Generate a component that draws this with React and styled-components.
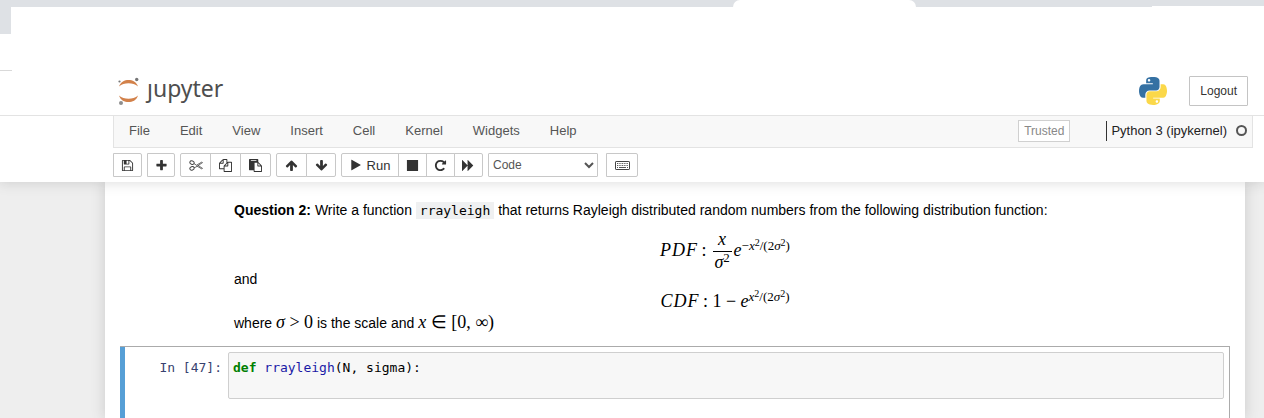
import React from "react";
import styled, { createGlobalStyle } from "styled-components";

const GlobalStyle = createGlobalStyle`
  * { box-sizing: border-box; }
  body {
    margin: 0;
    background: #eee;
    color: #000;
    font: 14px/20px "Liberation Sans", Arial, sans-serif;
  }
  button, select { font-family: inherit; margin: 0; }
`;

const Page = styled.div`
  display: flex;
  flex-direction: column;
  height: 100vh;
  overflow: hidden;
`;

/* Browser chrome */
const TabStrip = styled.div`
  position: relative;
  z-index: 2;
  display: grid;
  grid-template-columns: 58% 183px 1fr 112px;
  flex: none;
  height: 7px;
  background: #dee1e5;
`;
const ActiveTab = styled.div`
  grid-column: 2;
  background: #fff;
  border-radius: 8px 8px 0 0;
`;
const StripEnd = styled.div`
  grid-column: 4;
  border-bottom: 1px solid #fff;
`;
const WindowEdge = styled.div`
  width: 12px;
  height: 64px;
  border-bottom: 1px solid #d9d9d9;
  &::before {
    content: "";
    display: block;
    width: 11px;
    height: 27px;
    background: #dee1e5;
  }
`;

/* Header */
const Header = styled.header`
  position: relative;
  z-index: 1;
  flex: none;
  background: #fff;
  box-shadow: 0 0 12px 1px rgba(87, 87, 87, 0.2);
`;
const Brand = styled.div`
  display: flex;
  align-items: center;
  gap: 22px;
  padding: 5px 16px 9px 118px;
  border-bottom: 1px solid #e3e3e3;
`;
const Logo = styled.a`
  display: flex;
  align-items: center;
  gap: 8px;
  margin-right: auto;
  height: 30px;
  color: #4e4e4e;
  font: 23px/26px "Noto Sans", "Open Sans", sans-serif;
  text-decoration: none;
`;
const Wordmark = styled.span`
  padding-bottom: 6px;
`;
const LogoutButton = styled.button`
  height: 30px;
  padding: 0 10px;
  border: 1px solid #c4c4c4;
  border-radius: 1px;
  background: #fff;
  color: #333;
  font-size: 12px;
`;
const MenuBar = styled.nav`
  display: flex;
  align-items: center;
  height: 32px;
  margin: 0 11px 0 113px;
  padding-right: 5px;
  border: 1px solid #e3e3e3;
  border-top: 0;
  background: #f8f8f8;
`;
const MenuItem = styled.button`
  padding: 0 15px 2px;
  border: 0;
  background: none;
  color: #555;
  font-size: 13px;
  line-height: 28px;
`;
const Trusted = styled.button`
  height: 22px;
  margin: 0 36px 1px auto;
  padding: 0 5px;
  border: 1px solid #d0d0d0;
  background: #fff;
  color: #888;
  font-size: 12px;
`;
const Kernel = styled.span`
  display: flex;
  align-items: center;
  gap: 9px;
  height: 20px;
  margin-bottom: 2px;
  padding-left: 4px;
  border-left: 1px solid #333;
  color: #222;
  font-size: 13px;
`;
const IdleDot = styled.span`
  width: 11px;
  height: 11px;
  border: 2px solid #555;
  border-radius: 50%;
`;
const Toolbar = styled.div`
  display: flex;
  gap: 5px;
  padding: 5px 11px 5px 113px;
`;
const Group = styled.div`
  display: flex;
`;
const ToolButton = styled.button`
  display: flex;
  align-items: center;
  justify-content: center;
  gap: 5px;
  width: ${(p) => p.$width || 30}px;
  height: 24px;
  padding: 0;
  border: 1px solid #c8c8c8;
  background: #fff;
  color: #333;
  font-size: 13px;
  & + & { margin-left: -1px; }
  &:first-child { border-radius: 2px 0 0 2px; }
  &:last-child { border-radius: 0 2px 2px 0; }
`;
const CellType = styled.select`
  width: 110px;
  height: 24px;
  margin-right: 3px;
  padding: 0;
  border: 1px solid #c8c8c8;
  border-radius: 1px;
  background: #fff;
  color: #555;
  font-size: 12px;
`;

/* Notebook */
const Notebook = styled.main`
  display: flex;
  flex-direction: column;
  flex: 1;
  margin: 0 19px 0 105px;
  padding: 18px 15px 0;
  background: #fff;
  box-shadow: 0 0 12px 1px rgba(87, 87, 87, 0.2);
`;
const Markdown = styled.section`
  padding: 0 14px 13px 114px;
`;
const Text = styled.p`
  margin: 0;
`;
const InlineCode = styled.code`
  padding: 1px 4px;
  background: #eff0f1;
  font: 13px/16px "DejaVu Sans Mono", monospace;
`;
const Equation = styled.div`
  display: flex;
  align-items: center;
  justify-content: center;
  height: ${(p) => p.$height}px;
  padding-top: ${(p) => p.$top || 0}px;
  font: 18px/20px "Liberation Serif", "Times New Roman", serif;
  white-space: pre;
`;
const Name = styled.i`
  display: inline-flex;
  gap: 1px;
`;
const MathText = styled.span`
  font: 18px/20px "Liberation Serif", "Times New Roman", serif;
`;
const Fraction = styled.span`
  display: flex;
  flex-direction: column;
  align-items: center;
  width: 19px;
  margin: 4px 2px 0 6px;
`;
const Numerator = styled.i`
  align-self: stretch;
  padding-bottom: 4px;
  border-bottom: 1px solid #000;
  line-height: 16px;
  text-align: center;
`;
const Sup = styled.sup`
  font-size: ${(p) => p.$size || 13}px;
  line-height: 0;
  vertical-align: ${(p) => p.$raise || 6}px;
`;
const CodeCell = styled.section`
  display: flex;
  align-items: flex-start;
  flex: 1;
  padding: 5px 5px 0 0;
  border: 1px solid #ababab;
  border-width: 1px 1px 0 0;
  box-shadow: inset 5px 0 #569fd6;
  font: 13px/17px "DejaVu Sans Mono", monospace;
`;
const Prompt = styled.div`
  width: 108px;
  padding: 7px 6px 0 0;
  color: #38426f;
  text-align: right;
`;
const Editor = styled.pre`
  flex: 1;
  height: 47px;
  margin: 0;
  padding: 6px 4px;
  border: 1px solid #cfcfcf;
  border-radius: 2px;
  background: #f7f7f7;
  font: inherit;
`;
const Code = styled.code`
  font: inherit;
`;
const Keyword = styled.b`
  color: #008000;
`;
const FunctionName = styled.span`
  color: #1a1aa6;
`;

const PATHS = {
  save: "M512 1536h768v-384h-768v384zm896 0h128v-896q0-14-10-38.5t-20-34.5l-281-281q-10-10-34-20t-39-10v416q0 40-28 68t-68 28h-576q-40 0-68-28t-28-68v-416h-128v1280h128v-416q0-40 28-68t68-28h832q40 0 68 28t28 68v416zm-384-928v-320q0-13-9.5-22.5t-22.5-9.5h-192q-13 0-22.5 9.5t-9.5 22.5v320q0 13 9.5 22.5t22.5 9.5h192q13 0 22.5-9.5t9.5-22.5zm640 32v928q0 40-28 68t-68 28h-1344q-40 0-68-28t-28-68v-1344q0-40 28-68t68-28h928q40 0 88 20t76 48l280 280q28 28 48 76t20 88z",
  plus: "M1600 736v192q0 40-28 68t-68 28h-416v416q0 40-28 68t-68 28h-192q-40 0-68-28t-28-68v-416h-416q-40 0-68-28t-28-68v-192q0-40 28-68t68-28h416v-416q0-40 28-68t68-28h192q40 0 68 28t28 68v416h416q40 0 68 28t28 68z",
  copy: "M1696 384q40 0 68 28t28 68v1216q0 40-28 68t-68 28h-960q-40 0-68-28t-28-68v-288h-544q-40 0-68-28t-28-68v-672q0-40 20-88t48-76l408-408q28-28 76-48t88-20h416q40 0 68 28t28 68v328q68-40 128-40h416zm-544 213l-299 299h299v-299zm-640-384l-299 299h299v-299zm196 647l316-316v-416h-384v416q0 40-28 68t-68 28h-416v640h512v-256q0-40 20-88t48-76zm956 804v-1152h-384v416q0 40-28 68t-68 28h-416v640h896z",
  paste: "M768 1664h896v-640h-416q-40 0-68-28t-28-68v-416h-384v1152zm256-1440v-64q0-13-9.5-22.5t-22.5-9.5h-704q-13 0-22.5 9.5t-9.5 22.5v64q0 13 9.5 22.5t22.5 9.5h704q13 0 22.5-9.5t9.5-22.5zm256 672h299l-299-299v299zm512 128v672q0 40-28 68t-68 28h-960q-40 0-68-28t-28-68v-160h-544q-40 0-68-28t-28-68v-1344q0-40 28-68t68-28h1088q40 0 68 28t28 68v328q21 13 36 28l408 408q28 28 48 76t20 88z",
  up: "M1675 971q0 51-37 90l-75 75q-38 38-91 38-54 0-90-38l-294-293v704q0 52-37.5 84.5t-90.5 32.5h-128q-53 0-90.5-32.5t-37.5-84.5v-704l-294 293q-36 38-90 38t-90-38l-75-75q-38-38-38-90 0-53 38-91l651-651q35-37 90-37 54 0 91 37l651 651q37 39 37 91z",
  play: "M1576 927l-1328 738q-23 13-39.5 3t-16.5-36v-1472q0-26 16.5-36t39.5 3l1328 738q23 13 23 31t-23 31z",
  stop: "M1664 192v1408q0 26-19 45t-45 19h-1408q-26 0-45-19t-19-45v-1408q0-26 19-45t45-19h1408q26 0 45 19t19 45z",
  restart: "M1664 256v448q0 26-19 45t-45 19h-448q-42 0-59-40-17-39 14-69l138-138q-148-137-349-137-104 0-198.5 40.5t-163.5 109.5-109.5 163.5-40.5 198.5 40.5 198.5 109.5 163.5 163.5 109.5 198.5 40.5q119 0 225-52t179-147q7-10 23-12 15 0 25 9l137 138q9 8 9.5 20.5t-7.5 22.5q-109 132-264 204.5t-327 72.5q-156 0-298-61t-245-164-164-245-61-298 61-298 164-245 245-164 298-61q147 0 284.5 55.5t244.5 156.5l130-129q29-31 70-14 39 17 39 59z",
  forward: "M45 1651q-19 19-32 13t-13-32v-1472q0-26 13-32t32 13l710 710q9 9 13 19v-710q0-26 13-32t32 13l710 710q19 19 19 45t-19 45l-710 710q-19 19-32 13t-13-32v-710q-4 10-13 19z",
};

const Glyph = ({ name, size = 13, flip }) => (
  <svg width={size} height={size} viewBox="0 0 1792 1792" fill="currentColor" aria-hidden="true">
    <path d={PATHS[name]} transform={flip ? "rotate(180 896 896)" : undefined} />
  </svg>
);

const Scissors = () => (
  <svg width="14" height="13" viewBox="0 0 14 13" fill="none" stroke="#444" aria-hidden="true">
    <ellipse cx="3" cy="3.6" rx="2.2" ry="1.7" transform="rotate(20 3 3.6)" />
    <ellipse cx="3" cy="9.4" rx="2.2" ry="1.7" transform="rotate(-20 3 9.4)" />
    <path d="M5 4.6L7.5 6.2 12.6 3.2 13.5 3.6 7 8 5 8.6M7.5 6.8L12.6 9.8 13.5 9.4 9 6.3" strokeWidth="0.8" />
  </svg>
);

const Keyboard = () => (
  <svg width="15" height="9" viewBox="0 0 15 9" fill="none" stroke="#444" aria-hidden="true">
    <rect x="0.5" y="0.5" width="14" height="8" rx="0.6" />
    <path d="M2 2.5h11M2 4.5h11" strokeDasharray="1 0.7" strokeWidth="0.9" />
    <path d="M2 6.5h1M4 6.5h7M12 6.5h1" strokeWidth="0.9" />
  </svg>
);

const JupyterMark = () => (
  <svg width="21" height="28" viewBox="0 0 21 28" aria-hidden="true">
    <path d="M1 9.5C3 4.6 6.5 3 10.5 3s7.8 1.6 9.5 6.500C17.500 7 14 6.300 10.500 6.300S3.500 7 1 9.500z" fill="#d2814a" />
    <path d="M1 18.500C3.500 21 7 21.700 10.500 21.700S17.500 21 20 18.500C18.300 23.500 14.500 25 10.500 25S2.800 23.500 1 18.500z" fill="#d2814a" />
    <circle cx="18.7" cy="2.5" r="1.7" fill="#767677" />
    <circle cx="1.5" cy="4.5" r="1.1" fill="#767677" />
    <circle cx="3" cy="26" r="2" fill="#8e8e8e" />
  </svg>
);

const PythonMark = () => (
  <svg width="28" height="30" viewBox="0 24 448 464" aria-hidden="true">
    <path fill="#3571a3" d="M167.800 248.100h106.800c29.700 0 53.400-24.500 53.400-54.300V91.900c0-29-24.400-50.700-53.400-55.600-35.800-5.900-74.700-5.600-106.800.1-45.200 8-53.400 24.700-53.400 55.600v40.700h106.900v13.600h-147c-31.100 0-58.300 18.700-66.800 54.200-9.800 40.700-10.200 66.100 0 108.600 7.600 31.600 25.700 54.200 56.800 54.200H101v-48.800c0-35.300 30.500-66.400 66.800-66.400zm-6.700-142.600c-11.100 0-20.100-9.100-20.100-20.300.1-11.300 9-20.400 20.100-20.400 11 0 20.100 9.200 20.100 20.400s-9 20.300-20.100 20.300z" />
    <path fill="#fbd849" d="M439.800 200.500c-7.700-30.900-22.300-54.200-53.400-54.200h-40.100v47.400c0 36.800-31.200 67.800-66.800 67.800H172.700c-29.200 0-53.400 25-53.400 54.300v101.800c0 29 25.200 46 53.400 54.300 33.800 9.900 66.300 11.700 106.800 0 26.900-7.800 53.400-23.500 53.400-54.300v-40.700H226.200v-13.600h160.200c31.100 0 42.600-21.700 53.400-54.200 11.200-33.500 10.700-65.700 0-108.600zM286.200 404c11.100 0 20.100 9.100 20.100 20.300 0 11.300-9 20.400-20.100 20.400-11 0-20.100-9.200-20.100-20.400.1-11.300 9.100-20.300 20.100-20.300z" />
  </svg>
);

const MENUS = ["File", "Edit", "View", "Insert", "Cell", "Kernel", "Widgets", "Help"];

const Exponent = ({ sign = "" }) => (
  <Sup>
    {sign}<i>x</i><Sup $size={10} $raise={4}>2</Sup>/(2<i>σ</i><Sup $size={10} $raise={4}>2</Sup>)
  </Sup>
);

export default function App() {
  return (
    <Page>
      <GlobalStyle />
      <TabStrip>
        <ActiveTab />
        <StripEnd />
      </TabStrip>
      <Header>
        <WindowEdge />
        <Brand>
          <Logo href="#" aria-label="jupyter">
            <JupyterMark />
            <Wordmark>ȷupyter</Wordmark>
          </Logo>
          <PythonMark />
          <LogoutButton>Logout</LogoutButton>
        </Brand>
        <MenuBar>
          {MENUS.map((m) => <MenuItem key={m}>{m}</MenuItem>)}
          <Trusted>Trusted</Trusted>
          <Kernel>Python 3 (ipykernel) <IdleDot /></Kernel>
        </MenuBar>
        <Toolbar>
          <Group><ToolButton $width={29} aria-label="Save"><Glyph name="save" /></ToolButton></Group>
          <Group><ToolButton $width={28} aria-label="Insert cell below"><Glyph name="plus" /></ToolButton></Group>
          <Group>
            <ToolButton $width={31} aria-label="Cut cells"><Scissors /></ToolButton>
            <ToolButton $width={31} aria-label="Copy cells"><Glyph name="copy" /></ToolButton>
            <ToolButton $width={31} aria-label="Paste cells"><Glyph name="paste" /></ToolButton>
          </Group>
          <Group>
            <ToolButton $width={31} aria-label="Move up"><Glyph name="up" /></ToolButton>
            <ToolButton $width={30} aria-label="Move down"><Glyph name="up" flip /></ToolButton>
          </Group>
          <Group>
            <ToolButton $width={58}><Glyph name="play" size={12} />Run</ToolButton>
            <ToolButton $width={29} aria-label="Interrupt kernel"><Glyph name="stop" /></ToolButton>
            <ToolButton $width={29} aria-label="Restart kernel"><Glyph name="restart" /></ToolButton>
            <ToolButton $width={29} aria-label="Restart and run all"><Glyph name="forward" /></ToolButton>
          </Group>
          <CellType aria-label="Cell type" defaultValue="Code">
            <option>Code</option>
            <option>Markdown</option>
          </CellType>
          <Group><ToolButton $width={32} aria-label="Command palette"><Keyboard /></ToolButton></Group>
        </Toolbar>
      </Header>
      <Notebook>
        <Markdown>
          <Text>
            <b>Question 2:</b> Write a function <InlineCode>rrayleigh</InlineCode> that returns
            Rayleigh distributed random numbers from the following distribution function:
          </Text>
          <Equation $height={49} $top={10}>
            <Name><span>P</span><span>D</span><span>F</span></Name>
            <span> :</span>
            <Fraction>
              <Numerator>x</Numerator>
              <span><i>σ</i><Sup>2</Sup></span>
            </Fraction>
            <span><i>e</i><Exponent sign="−" /></span>
          </Equation>
          <Text>and</Text>
          <Equation $height={23}>
            <Name><span>C</span><span>D</span><span>F</span></Name>
            <span> : 1 − <i>e</i><Exponent /></span>
          </Equation>
          <Text>
            where <MathText><i>σ</i> &gt; 0</MathText> is the scale and <MathText><i>x</i> ∈ [0, ∞)</MathText>
          </Text>
        </Markdown>
        <CodeCell>
          <Prompt>In [47]:</Prompt>
          <Editor>
            <Code><Keyword>def</Keyword> <FunctionName>rrayleigh</FunctionName>(N, sigma):</Code>
          </Editor>
        </CodeCell>
      </Notebook>
    </Page>
  );
}
